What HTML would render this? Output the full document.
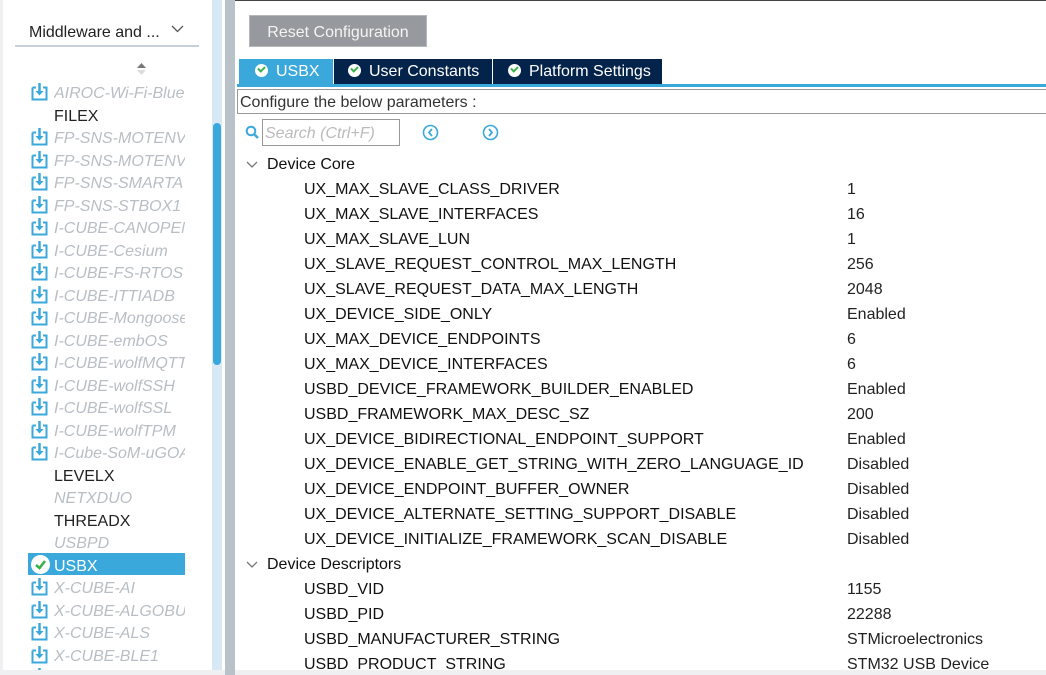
<!DOCTYPE html>
<html><head><meta charset="utf-8"><style>
*{margin:0;padding:0;box-sizing:border-box}
html,body{width:1046px;height:675px;overflow:hidden}
body{background:#fff;font-family:"Liberation Sans",Arial,sans-serif;position:relative}
.a{position:absolute;white-space:nowrap}
.li{position:absolute;left:54px;font-size:16px;line-height:20px;color:#b8bec4;font-style:italic;width:131px;overflow:hidden;white-space:nowrap}
.li.n{color:#222;font-style:normal}
.ic{position:absolute;left:31px;width:17px;height:18px}
.r{position:absolute;left:304px;font-size:16px;line-height:20px;color:#111;white-space:nowrap}
.v{position:absolute;left:847px;font-size:16px;line-height:20px;color:#222;white-space:nowrap}
.g{position:absolute;left:267px;font-size:16px;line-height:20px;color:#111;white-space:nowrap}
.tab{position:absolute;top:59px;height:25px;background:#03234b;color:#fff;font-size:16px;line-height:26px;white-space:nowrap}
.ck{display:inline-block;width:13px;height:13px;border-radius:50%;background:#fff;vertical-align:-1px;margin-right:8px;position:relative}
.ck:after{content:"";position:absolute;left:3px;top:2px;width:5px;height:3px;border-left:2px solid #3cb04a;border-bottom:2px solid #3cb04a;transform:rotate(-45deg)}
#list{position:absolute;left:0;top:0;width:212px;height:670px;overflow:hidden}
</style></head><body>
<div class="a" style="left:0;top:0;width:3px;height:675px;background:#eef0f2"></div>
<div class="a" style="left:212px;top:0;width:10px;height:670px;background:#d9e8f5"></div>
<div class="a" style="left:213px;top:123px;width:8px;height:242px;background:#3aa8db;border-radius:4px"></div>
<div class="a" style="left:225px;top:0;width:10px;height:675px;background:#b9c2c8"></div>
<div class="a" style="left:235px;top:0;width:811px;height:1px;background:#444"></div>

<div class="a" style="left:29px;top:24px;font-size:16px;color:#222">Middleware and ...</div>
<svg class="a" style="left:171px;top:25px" width="13" height="8"><path d="M1 1L6.5 6.5L12 1" stroke="#555" fill="none" stroke-width="1.3"/></svg>
<div class="a" style="left:15px;top:45px;width:184px;height:2px;background:#c8d0d8"></div>
<svg class="a" style="left:136px;top:62px" width="11" height="14"><path d="M1 6L5.5 1L10 6Z" fill="#777"/><path d="M1 8L5.5 13L10 8Z" fill="#ddd"/></svg>

<svg width="0" height="0" style="position:absolute"><defs><g id="dl"><path d="M1.5 4.5V16.5H15.5V4.5H12" stroke="#3aa8db" stroke-width="2" fill="none"/><path d="M5 4.5H1.5" stroke="#3aa8db" stroke-width="2"/><path d="M8.5 0V10" stroke="#3aa8db" stroke-width="2.5"/><path d="M4.5 8L8.5 12.5L12.5 8Z" fill="#3aa8db"/></g></defs></svg>

<div id="list"></div>
<script>
var L=[["AIROC-Wi-Fi-Blue",1],["FILEX",0],["FP-SNS-MOTENV",1],["FP-SNS-MOTENV",1],["FP-SNS-SMARTA",1],["FP-SNS-STBOX1",1],["I-CUBE-CANOPEN",1],["I-CUBE-Cesium",1],["I-CUBE-FS-RTOS",1],["I-CUBE-ITTIADB",1],["I-CUBE-Mongoose",1],["I-CUBE-embOS",1],["I-CUBE-wolfMQTT",1],["I-CUBE-wolfSSH",1],["I-CUBE-wolfSSL",1],["I-CUBE-wolfTPM",1],["I-Cube-SoM-uGOAL",1],["LEVELX",0],["NETXDUO",2],["THREADX",0],["USBPD",2],["USBX",3],["X-CUBE-AI",1],["X-CUBE-ALGOBUILD",1],["X-CUBE-ALS",1],["X-CUBE-BLE1",1],["X",1]];
var h='<div class="a" style="left:28px;top:553px;width:157px;height:22px;background:#3aa8db"></div><div class="a" style="left:31px;top:555px;width:19px;height:19px;border-radius:50%;background:#fff"></div><svg class="a" style="left:31px;top:555px" width="19" height="19"><path d="M5 10L8.5 13L14 6" stroke="#3cb04a" stroke-width="2.6" fill="none"/></svg>';
L.forEach(function(e,i){var y=84+i*22.5;
if(e[1]==1)h+='<svg class="ic" style="top:'+(y-1)+'px" width="17" height="18"><use href="#dl"/></svg>';
var st=e[1]==0?' n':'';var c=e[1]==3?' style="top:'+y+'px;color:#fff;font-style:normal"':' style="top:'+y+'px"';
h+='<div class="li'+st+'"'+c+'>'+e[0]+'</div>';});
document.getElementById("list").innerHTML=h;
</script>

<div class="a" style="left:249px;top:15px;width:178px;height:32px;background:#969a9e;border:1px solid #b4b8bc;color:#f4f4f4;font-size:16px;line-height:33px;text-align:center">Reset Configuration</div>
<div class="tab" style="left:239px;width:94px;background:#3aa8db;padding-left:16px"><span class="ck"></span>USBX</div>
<div class="tab" style="left:334px;width:158px;padding-left:14px"><span class="ck"></span>User Constants</div>
<div class="tab" style="left:493px;width:169px;padding-left:15px"><span class="ck"></span>Platform Settings</div>
<div class="a" style="left:237px;top:84px;width:809px;height:3px;background:#3aa8db"></div>
<div class="a" style="left:237px;top:89px;width:809px;height:25px;border:1px solid #999;border-right:none"></div>
<div class="a" style="left:240px;top:94px;font-size:16px;color:#333">Configure the below parameters :</div>
<svg class="a" style="left:245px;top:125px" width="15" height="15"><circle cx="6" cy="6" r="4.3" stroke="#3aa8db" stroke-width="2" fill="none"/><path d="M9 9L13 13" stroke="#3aa8db" stroke-width="2.4"/></svg>
<div class="a" style="left:262px;top:119px;width:138px;height:27px;border:1px solid #999"></div>
<div class="a" style="left:265px;top:125px;font-size:16px;color:#bbb;font-style:italic">Search (Ctrl+F)</div>
<svg class="a" style="left:422px;top:124px" width="17" height="17"><circle cx="8.5" cy="8.5" r="7" stroke="#3aa8db" stroke-width="1.6" fill="none"/><path d="M10 5L7 8.5L10 12" stroke="#3aa8db" stroke-width="1.8" fill="none"/></svg>
<svg class="a" style="left:482px;top:124px" width="17" height="17"><circle cx="8.5" cy="8.5" r="7" stroke="#3aa8db" stroke-width="1.6" fill="none"/><path d="M7 5L10 8.5L7 12" stroke="#3aa8db" stroke-width="1.8" fill="none"/></svg>

<div id="rows"></div>
<script>
var R=[["g","Device Core"],["UX_MAX_SLAVE_CLASS_DRIVER","1"],["UX_MAX_SLAVE_INTERFACES","16"],["UX_MAX_SLAVE_LUN","1"],["UX_SLAVE_REQUEST_CONTROL_MAX_LENGTH","256"],["UX_SLAVE_REQUEST_DATA_MAX_LENGTH","2048"],["UX_DEVICE_SIDE_ONLY","Enabled"],["UX_MAX_DEVICE_ENDPOINTS","6"],["UX_MAX_DEVICE_INTERFACES","6"],["USBD_DEVICE_FRAMEWORK_BUILDER_ENABLED","Enabled"],["USBD_FRAMEWORK_MAX_DESC_SZ","200"],["UX_DEVICE_BIDIRECTIONAL_ENDPOINT_SUPPORT","Enabled"],["UX_DEVICE_ENABLE_GET_STRING_WITH_ZERO_LANGUAGE_ID","Disabled"],["UX_DEVICE_ENDPOINT_BUFFER_OWNER","Disabled"],["UX_DEVICE_ALTERNATE_SETTING_SUPPORT_DISABLE","Disabled"],["UX_DEVICE_INITIALIZE_FRAMEWORK_SCAN_DISABLE","Disabled"],["g","Device Descriptors"],["USBD_VID","1155"],["USBD_PID","22288"],["USBD_MANUFACTURER_STRING","STMicroelectronics"],["USBD_PRODUCT_STRING","STM32 USB Device"]];
var h="";R.forEach(function(e,i){var y=155+i*25;
if(e[0]=="g"){h+='<svg class="a" style="left:246px;top:'+(y+6)+'px" width="12" height="8"><path d="M1 1L6 6L11 1" stroke="#777" fill="none" stroke-width="1.3"/></svg><div class="g" style="top:'+y+'px">'+e[1]+'</div>';}
else h+='<div class="r" style="top:'+y+'px">'+e[0]+'</div><div class="v" style="top:'+y+'px">'+e[1]+'</div>';});
document.getElementById("rows").innerHTML=h;
</script>
<div class="a" style="left:0;top:670px;width:1046px;height:5px;background:#eef0f2"></div>
<div class="a" style="left:225px;top:670px;width:10px;height:5px;background:#b9c2c8"></div>
</body></html>
